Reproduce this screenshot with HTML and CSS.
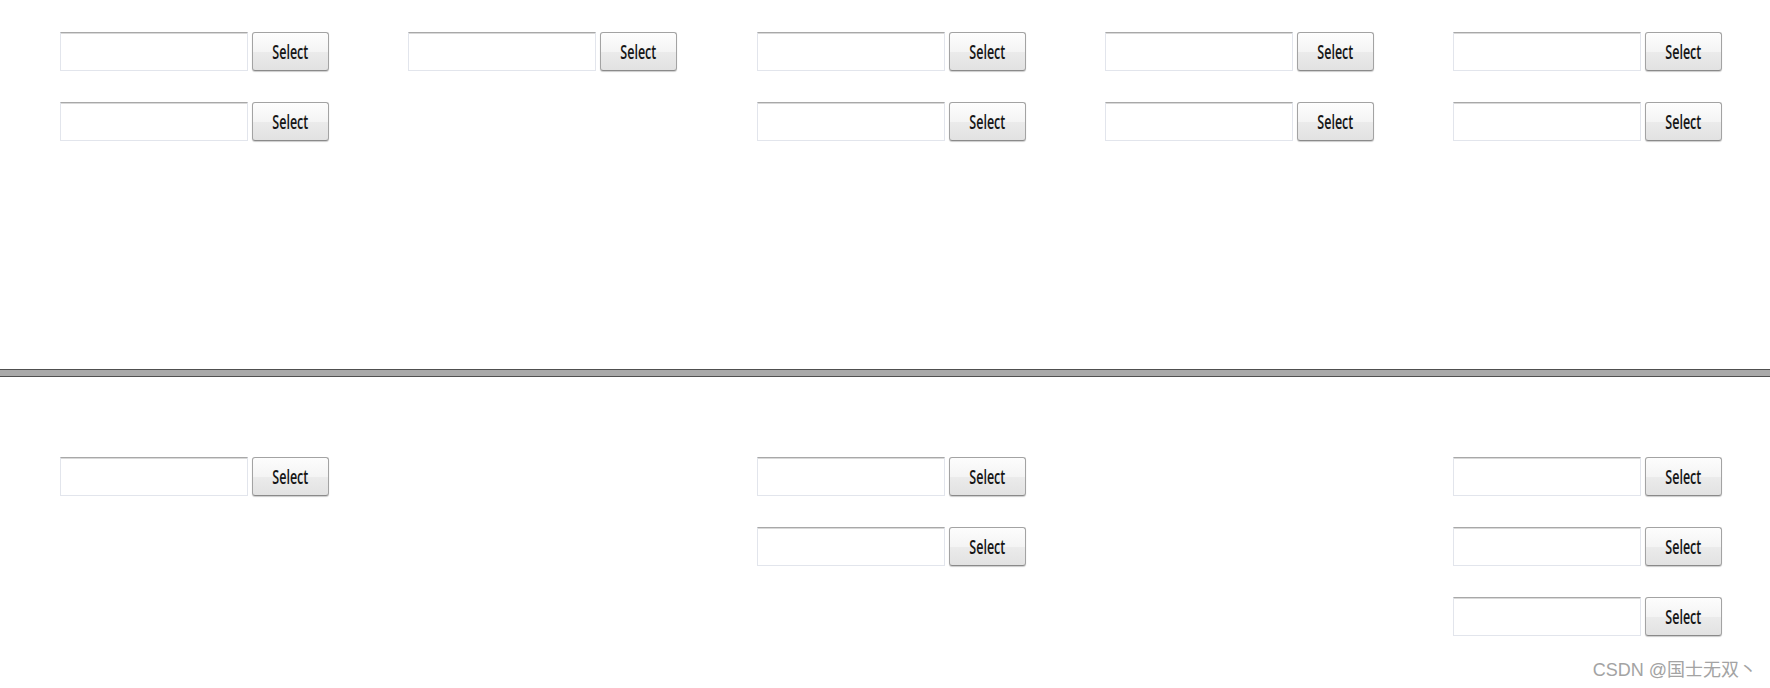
FILE: index.html
```html
<!DOCTYPE html>
<html lang="en">
<head>
    <meta charset="UTF-8">
    <meta name="viewport" content="width=device-width, initial-scale=1.0">
    <link rel="stylesheet" href="styles.css">
</head>
<body>
    <div class="panel panel-top">
        <div class="col">
            <div class="field"><input type="text" class="box"><button class="pick"><span>Select</span></button></div>
            <div class="field"><input type="text" class="box"><button class="pick"><span>Select</span></button></div>
        </div>
        <div class="col">
            <div class="field"><input type="text" class="box"><button class="pick"><span>Select</span></button></div>
        </div>
        <div class="col">
            <div class="field"><input type="text" class="box"><button class="pick"><span>Select</span></button></div>
            <div class="field"><input type="text" class="box"><button class="pick"><span>Select</span></button></div>
        </div>
        <div class="col">
            <div class="field"><input type="text" class="box"><button class="pick"><span>Select</span></button></div>
            <div class="field"><input type="text" class="box"><button class="pick"><span>Select</span></button></div>
        </div>
        <div class="col">
            <div class="field"><input type="text" class="box"><button class="pick"><span>Select</span></button></div>
            <div class="field"><input type="text" class="box"><button class="pick"><span>Select</span></button></div>
        </div>
    </div>

    <div class="divider"></div>

    <div class="panel panel-bottom">
        <div class="col">
            <div class="field"><input type="text" class="box"><button class="pick"><span>Select</span></button></div>
        </div>
        <div class="col"></div>
        <div class="col">
            <div class="field"><input type="text" class="box"><button class="pick"><span>Select</span></button></div>
            <div class="field"><input type="text" class="box"><button class="pick"><span>Select</span></button></div>
        </div>
        <div class="col"></div>
        <div class="col">
            <div class="field"><input type="text" class="box"><button class="pick"><span>Select</span></button></div>
            <div class="field"><input type="text" class="box"><button class="pick"><span>Select</span></button></div>
            <div class="field"><input type="text" class="box"><button class="pick"><span>Select</span></button></div>
        </div>
    </div>

    <div class="watermark">CSDN @国士无双丶</div>
</body>
</html>
```

FILE: styles.css
```css
body {
    margin: 0;
    font-family: 'Open Sans', 'Noto Sans', sans-serif;
    background-color: #fff;
    position: relative;
    height: 688px;
    overflow: hidden;
}

.panel {
    display: grid;
    grid-template-columns: repeat(5, 348.25px);
    padding-left: 60px;
    box-sizing: border-box;
}

.panel-top {
    height: 369px;
    padding-top: 32px;
}

.panel-bottom {
    padding-top: 80px;
}

.col {
    display: flex;
    flex-direction: column;
    gap: 31px;
}

.field {
    display: flex;
    gap: 4px;
}

.box {
    width: 188px;
    height: 39px;
    box-sizing: border-box;
    margin: 0;
    padding: 0 4px;
    border: 1px solid #e2e5ec;
    border-top: 1px solid #a8a8a8;
    box-shadow: inset 0 1px 0 #d9d9d9;
    background-color: #fff;
    outline: none;
}

.pick {
    width: 77px;
    height: 39px;
    box-sizing: border-box;
    margin: 0;
    padding: 0;
    border: 1px solid #a3a3a3;
    border-bottom-color: #8a8a8a;
    border-radius: 3px;
    background: linear-gradient(#fdfdfd, #f4f4f4 50%, #ebebeb 51%, #e2e2e2);
    box-shadow: 0 1px 1px rgba(0,0,0,0.2);
    color: #161616;
    font-family: 'Open Sans', sans-serif;
    font-size: 19px;
    font-weight: 600;
}

.pick span {
    display: inline-block;
    transform: scaleX(0.66);
}

.divider {
    height: 8px;
    box-sizing: border-box;
    background-color: #a9a9a9;
    border-top: 1px solid #505050;
    border-bottom: 1px solid #505050;
}

.watermark {
    position: absolute;
    right: 13px;
    bottom: 7px;
    font-family: 'Liberation Sans', 'Noto Sans CJK SC', sans-serif;
    font-size: 18px;
    color: #a3a3a3;
}
```
